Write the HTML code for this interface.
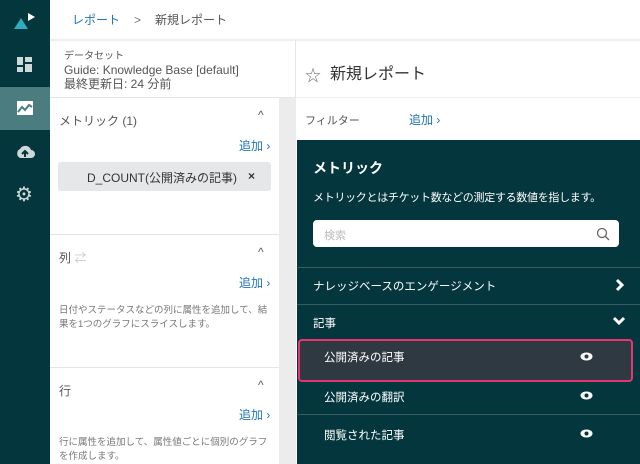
<!DOCTYPE html><html><head><style>
*{margin:0;padding:0;box-sizing:border-box}
body{width:640px;height:464px;overflow:hidden;font-family:"Liberation Sans","Noto Sans CJK JP",sans-serif;background:#fff;position:relative;color:#555}
.a{position:absolute}
.sb{left:0;top:0;width:50px;height:464px;background:#03363d}
.t{white-space:nowrap}
</style></head><body>
<div class="a sb"></div>
<div class="a" style="left:0;top:87px;width:50px;height:43px;background:#4b7c7f"></div>
<svg class="a" style="left:13px;top:12px" width="26" height="20"><polygon points="1,17 8,6 15,17" fill="#30aabc"/><polygon points="15,1 22,5 15,9" fill="#fff"/></svg>
<svg class="a" style="left:17px;top:57px" width="16" height="16" fill="#cfd8d9"><rect x="0" y="0" width="6" height="8"/><rect x="8" y="0" width="7" height="5"/><rect x="0" y="10" width="6" height="5"/><rect x="8" y="7" width="7" height="8"/></svg>
<svg class="a" style="left:17px;top:101px" width="16" height="14"><rect width="16" height="14" fill="#fff"/><polyline points="1,11 5,6 8,9 12,4 15,6" stroke="#4b7c7f" stroke-width="2" fill="none"/></svg>
<svg class="a" style="left:15px;top:144px" width="20" height="16"><path d="M5 14 A5 5 0 0 1 5 5 A6 6 0 0 1 16 6 A4 4 0 0 1 16 14Z" fill="#cfd8d9"/><path d="M10 13V8M7 10l3-3 3 3" stroke="#03363d" stroke-width="2" fill="none"/></svg>
<div class="a t" style="left:15px;top:182px;font-size:20px;color:#cfd8d9">⚙</div>
<div class="a t" style="left:72px;top:11px;font-size:12px;color:#1f73b7">レポート<span style="color:#777;margin:0 14px">&gt;</span><span style="color:#555">新規レポート</span></div>
<div class="a" style="left:50px;top:39px;width:590px;height:2px;background:#eee"></div>
<div class="a t" style="left:64px;top:50px;font-size:10px;line-height:13.5px;color:#555">データセット<br><span style="font-size:12px">Guide: Knowledge Base [default]</span><br><span style="font-size:12px">最終更新日: 24 分前</span></div>
<div class="a" style="left:50px;top:97px;width:246px;height:1px;background:#e5e5e5"></div>
<div class="a" style="left:295px;top:40px;width:1px;height:100px;background:#e5e5e5"></div>
<div class="a" style="left:279px;top:98px;width:17px;height:366px;background:#ececec"></div>
<div class="a t" style="left:59px;top:112px;font-size:12px">メトリック (1)</div>
<div class="a t" style="left:258px;top:108px;font-size:12px">^</div>
<div class="a t" style="left:239px;top:137px;font-size:12px;color:#1f73b7">追加 ›</div>
<div class="a" style="left:58px;top:162px;width:213px;height:29px;background:#e6e7e8;border-radius:3px"></div>
<div class="a t" style="left:87px;top:169px;font-size:12px;color:#333">D_COUNT(公開済みの記事)</div>
<div class="a t" style="left:248px;top:169px;font-size:12px;color:#333;font-weight:bold">×</div>
<div class="a" style="left:50px;top:234px;width:229px;height:1px;background:#e5e5e5"></div>
<div class="a t" style="left:59px;top:249px;font-size:12px">列 <span style="color:#ccc">⇄</span></div>
<div class="a t" style="left:258px;top:245px;font-size:12px">^</div>
<div class="a t" style="left:239px;top:274px;font-size:12px;color:#1f73b7">追加 ›</div>
<div class="a" style="left:59px;top:304px;font-size:9.5px;line-height:14px;width:215px;color:#777">日付やステータスなどの列に属性を追加して、結果を1つのグラフにスライスします。</div>
<div class="a" style="left:50px;top:367px;width:229px;height:1px;background:#e5e5e5"></div>
<div class="a t" style="left:59px;top:382px;font-size:12px">行</div>
<div class="a t" style="left:258px;top:378px;font-size:12px">^</div>
<div class="a t" style="left:239px;top:406px;font-size:12px;color:#1f73b7">追加 ›</div>
<div class="a" style="left:59px;top:436px;font-size:9.5px;line-height:14px;width:215px;color:#777">行に属性を追加して、属性値ごとに個別のグラフを作成します。</div>
<div class="a t" style="left:305px;top:62px;font-size:16px;color:#777">☆</div>
<div class="a t" style="left:330px;top:60px;font-size:16px;color:#333">新規レポート</div>
<div class="a" style="left:296px;top:97px;width:344px;height:1px;background:#eee"></div>
<div class="a t" style="left:305px;top:112px;font-size:11px">フィルター</div>
<div class="a t" style="left:409px;top:111px;font-size:12px;color:#1f73b7">追加 ›</div>
<div class="a" style="left:297px;top:140px;width:343px;height:324px;background:#03363d"></div>
<div class="a t" style="left:313px;top:158px;font-size:14px;font-weight:bold;color:#fff">メトリック</div>
<div class="a t" style="left:313px;top:189px;font-size:11px;color:#fff;letter-spacing:-0.3px">メトリックとはチケット数などの測定する数値を指します。</div>
<div class="a" style="left:313px;top:220px;width:306px;height:27px;background:#fff;border-radius:4px"></div>
<div class="a t" style="left:324px;top:227px;font-size:11px;color:#bbb">検索</div>
<svg class="a" style="left:596px;top:227px" width="14" height="14"><circle cx="6" cy="6" r="4.5" stroke="#666" stroke-width="1.3" fill="none"/><path d="M9.5 9.5L13 13" stroke="#666" stroke-width="1.3"/></svg>
<div class="a" style="left:297px;top:267px;width:343px;height:1px;background:#3b5d62"></div>
<div class="a t" style="left:313px;top:278px;font-size:11.5px;color:#fff">ナレッジベースのエンゲージメント</div>
<svg class="a" style="left:615px;top:278px" width="10" height="14"><path d="M2 2l5 5-5 5" stroke="#fff" stroke-width="3" fill="none"/></svg>
<div class="a" style="left:297px;top:304px;width:343px;height:1px;background:#3b5d62"></div>
<div class="a t" style="left:313px;top:315px;font-size:11.5px;color:#fff">記事</div>
<svg class="a" style="left:612px;top:316px" width="14" height="10"><path d="M2 2l5 5 5-5" stroke="#fff" stroke-width="3" fill="none"/></svg>
<div class="a" style="left:298px;top:339px;width:335px;height:43px;background:#2f3941;border:2px solid #e8356f;border-radius:4px"></div>
<div class="a t" style="left:324px;top:349px;font-size:11.5px;color:#fff">公開済みの記事</div>
<div class="a t" style="left:324px;top:389px;font-size:11.5px;color:#fff">公開済みの翻訳</div>
<div class="a" style="left:297px;top:414px;width:343px;height:1px;background:#3b5d62"></div>
<div class="a t" style="left:324px;top:427px;font-size:11.5px;color:#fff">閲覧された記事</div>
<svg class="a" style="left:580px;top:352px" width="13" height="9"><ellipse cx="6.5" cy="4.5" rx="6" ry="4" fill="#fff"/><circle cx="6.5" cy="4.5" r="2" fill="#2f3941"/></svg>
<svg class="a" style="left:580px;top:391px" width="13" height="9"><ellipse cx="6.5" cy="4.5" rx="6" ry="4" fill="#fff"/><circle cx="6.5" cy="4.5" r="2" fill="#03363d"/></svg>
<svg class="a" style="left:580px;top:429px" width="13" height="9"><ellipse cx="6.5" cy="4.5" rx="6" ry="4" fill="#fff"/><circle cx="6.5" cy="4.5" r="2" fill="#03363d"/></svg>
</body></html>
